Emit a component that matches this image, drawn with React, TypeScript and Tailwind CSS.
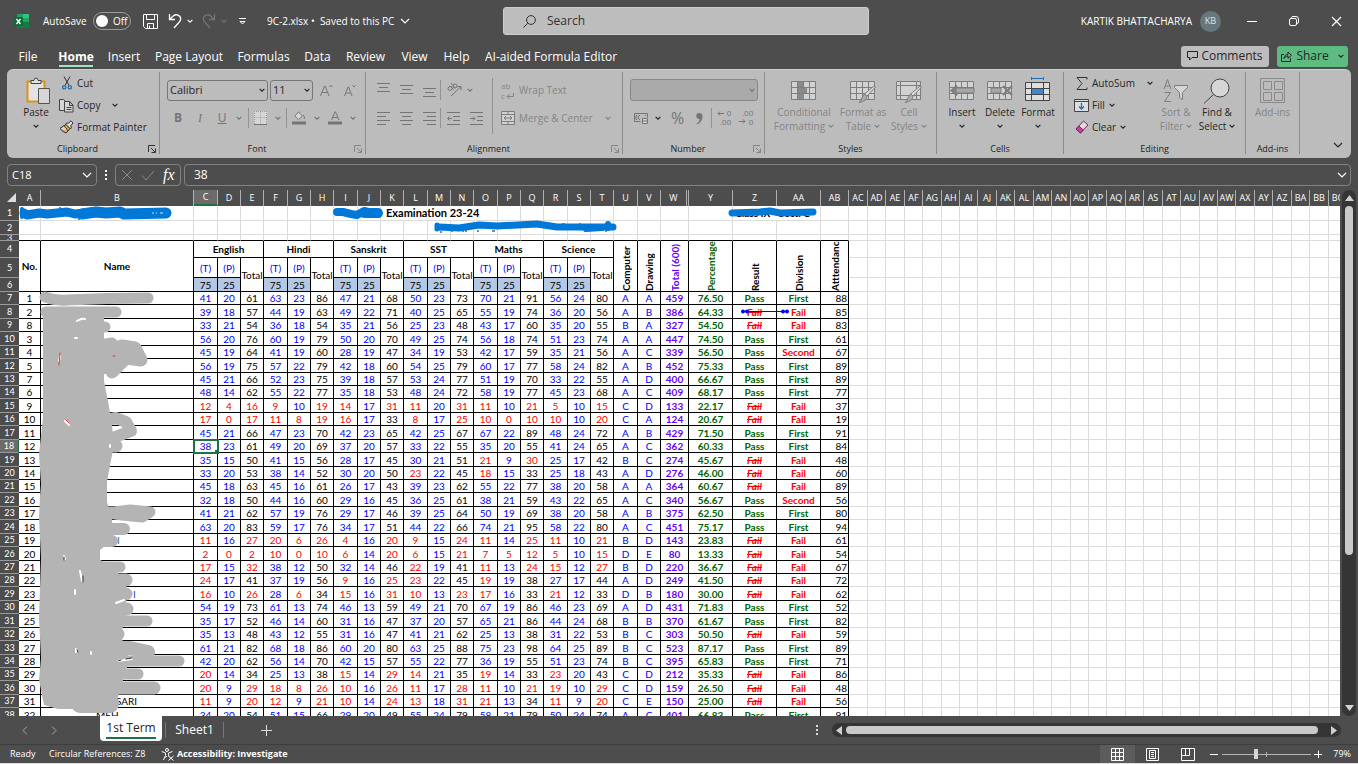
import type { ReactNode } from "react";

/* columns of the sheet: label + width */
const COLS: [string, number][] = [
  ["A", 22], ["B", 153],
  ["C", 24], ["D", 23], ["E", 23], ["F", 24], ["G", 23], ["H", 23],
  ["I", 24], ["J", 23], ["K", 23], ["L", 24], ["M", 23], ["N", 23],
  ["O", 24], ["P", 23], ["Q", 23], ["R", 24], ["S", 23], ["T", 23],
  ["U", 24], ["V", 23], ["W", 28], ["Y", 44], ["Z", 44], ["AA", 44], ["AB", 28],
];

const EMPTY = [
  "AC", "AD", "AE", "AF", "AG", "AH", "AI", "AJ", "AK", "AL", "AM", "AN", "AO", "AP",
  "AQ", "AR", "AS", "AT", "AU", "AV", "AW", "AX", "AY", "AZ", "BA", "BB", "BC",
];

const SUBJECTS = ["English", "Hindi", "Sanskrit", "SST", "Maths", "Science"];

type Student = [number, number[], string, string, string, number];

/* no, (T)/(P) marks, computer, drawing, division, attendance */
const STUDENTS: Student[] = [
  [1, [41, 20, 63, 23, 47, 21, 50, 23, 70, 21, 56, 24], "A", "A", "First", 88],
  [2, [39, 18, 44, 19, 49, 22, 40, 25, 55, 19, 36, 20], "A", "B", "Fail", 85],
  [8, [33, 21, 36, 18, 35, 21, 25, 23, 43, 17, 35, 20], "B", "A", "Fail", 83],
  [3, [56, 20, 60, 19, 50, 20, 49, 25, 56, 18, 51, 23], "A", "A", "First", 61],
  [4, [45, 19, 41, 19, 28, 19, 34, 19, 42, 17, 35, 21], "A", "C", "Second", 67],
  [5, [56, 19, 57, 22, 42, 18, 54, 25, 60, 17, 58, 24], "A", "B", "First", 89],
  [7, [45, 21, 52, 23, 39, 18, 53, 24, 51, 19, 33, 22], "A", "D", "First", 89],
  [6, [48, 14, 55, 22, 35, 18, 48, 24, 58, 19, 45, 23], "A", "C", "First", 77],
  [9, [12, 4, 9, 10, 14, 17, 11, 20, 11, 10, 5, 10], "C", "D", "Fail", 37],
  [10, [17, 0, 11, 8, 16, 17, 8, 17, 10, 0, 10, 10], "C", "A", "Fail", 19],
  [11, [45, 21, 47, 23, 42, 23, 42, 25, 67, 22, 48, 24], "A", "B", "First", 91],
  [12, [38, 23, 49, 20, 37, 20, 33, 22, 35, 20, 41, 24], "A", "C", "First", 84],
  [13, [35, 15, 41, 15, 28, 17, 30, 21, 21, 9, 25, 17], "B", "C", "Fail", 48],
  [14, [33, 20, 38, 14, 30, 20, 23, 22, 18, 15, 25, 18], "A", "D", "Fail", 60],
  [15, [45, 18, 45, 16, 26, 17, 39, 23, 55, 22, 38, 20], "A", "A", "Fail", 89],
  [16, [32, 18, 44, 16, 29, 16, 36, 25, 38, 21, 43, 22], "A", "C", "Second", 56],
  [17, [41, 21, 57, 19, 29, 17, 39, 25, 50, 19, 38, 20], "A", "B", "First", 80],
  [18, [63, 20, 59, 17, 34, 17, 44, 22, 74, 21, 58, 22], "A", "C", "First", 94],
  [19, [11, 16, 20, 6, 4, 16, 9, 15, 11, 14, 11, 10], "B", "D", "Fail", 61],
  [20, [2, 0, 10, 0, 6, 14, 6, 15, 7, 5, 5, 10], "D", "E", "Fail", 54],
  [21, [17, 15, 38, 12, 32, 14, 22, 19, 11, 13, 15, 12], "B", "D", "Fail", 67],
  [22, [24, 17, 37, 19, 9, 16, 23, 22, 19, 19, 27, 17], "A", "D", "Fail", 72],
  [23, [16, 10, 28, 6, 15, 16, 10, 13, 17, 16, 21, 12], "D", "B", "Fail", 62],
  [24, [54, 19, 61, 13, 46, 13, 49, 21, 67, 19, 46, 23], "A", "D", "First", 52],
  [25, [35, 17, 46, 14, 31, 16, 37, 20, 65, 21, 44, 24], "B", "B", "First", 82],
  [26, [35, 13, 43, 12, 31, 16, 41, 21, 25, 13, 31, 22], "B", "C", "Fail", 59],
  [27, [61, 21, 68, 18, 60, 20, 63, 25, 75, 23, 64, 25], "B", "C", "First", 89],
  [28, [42, 20, 56, 14, 42, 15, 55, 22, 36, 19, 51, 23], "B", "C", "First", 71],
  [29, [20, 14, 25, 13, 15, 14, 14, 21, 19, 14, 23, 20], "C", "D", "Fail", 86],
  [30, [20, 9, 18, 8, 10, 16, 11, 17, 11, 10, 19, 10], "C", "D", "Fail", 48],
  [31, [11, 9, 12, 9, 10, 14, 13, 18, 21, 13, 11, 9], "C", "E", "Fail", 56],
  [32, [34, 20, 51, 15, 29, 20, 55, 24, 58, 21, 50, 24], "A", "C", "First", 91],
];

function Chevron({ big = false }: { big?: boolean }) {
  return (
    <svg width={big ? 10 : 6} height={big ? 6 : 4} viewBox="0 0 10 6" fill="none" stroke="currentColor" strokeWidth={big ? 1.2 : 1.9} className="shrink-0">
      <path d="M1 1l4 4 4-4" />
    </svg>
  );
}

function Group({ label, className, launcher, children }: { label: string; className: string; launcher?: "on" | "off"; children: ReactNode }) {
  return (
    <section className={`flex shrink-0 flex-col border-r border-[#8c8c8c] ${className}`}>
      <div className="flex flex-1">{children}</div>
      <div className="flex h-[11px] items-center">
        <span className="flex-1 text-center text-[9px] leading-[11px] text-[#1c1c1c]">{label}</span>
        {launcher && (
          <button type="button" aria-label={`${label} settings`} className={`mr-[3px] ${launcher === "on" ? "text-[#333]" : "text-[#858585]"}`}>
            <svg width="8" height="8" viewBox="0 0 8 8" fill="none" stroke="currentColor">
              <path d="M.5 7V.5H7M3 3l4 4M7.5 3.500v4h-4" />
            </svg>
          </button>
        )}
      </div>
    </section>
  );
}

/* tall ribbon button: icon on top, one or two lines under it */
function Big({ icon, line1, line2, off, className }: { icon: ReactNode; line1: string; line2?: string; off?: boolean; className: string }) {
  return (
    <button type="button" className={`flex shrink-0 flex-col items-center pt-[4px] whitespace-nowrap ${off ? "text-[#858585]" : "text-[#262626]"} ${className}`}>
      <span className="flex h-[29px] items-center justify-center">{icon}</span>
      <span className="leading-[14px]">{line1}</span>
      {line2 !== undefined && (
        <span className="flex h-[14px] items-center gap-[3px] leading-[14px]">
          {line2}
          <Chevron />
        </span>
      )}
    </button>
  );
}

function Small({ icon, label, arrow, wide }: { icon: ReactNode; label: string; arrow?: boolean; wide?: boolean }) {
  return (
    <button type="button" className="flex h-[22px] items-center whitespace-nowrap text-[#262626]">
      <span className="mr-[3px] flex w-[15px] justify-center">{icon}</span>
      {label}
      {arrow && (
        <span className={wide ? "ml-[12px]" : "ml-[4px]"}>
          <Chevron />
        </span>
      )}
    </button>
  );
}

function Sep() {
  return <span className="h-[20px] w-px shrink-0 bg-[#939393]" />;
}

function Lines({ d }: { d: string }) {
  return (
    <svg width="14" height="14" viewBox="0 0 14 14" fill="none" stroke="#757575" className="shrink-0">
      <path d={d} />
    </svg>
  );
}

function TableIcon({ children }: { children?: ReactNode }) {
  return (
    <svg width="28" height="26" viewBox="0 0 28 26" fill="none" stroke="#7d7d7d">
      <path d="M1.500 3.500h24v18h-24z" fill="#d2d2d2" />
      <path d="M1.500 9.500h24M1.500 15.500h24M7.500 3.500v18M13.500 3.500v18M19.500 3.500v18" />
      {children}
    </svg>
  );
}

function TitleBar() {
  return (
    <header className="flex h-[42px] shrink-0 items-center text-[10px] text-white">
      <div className="flex w-[503px] shrink-0 items-center">
        <svg width="15" height="15" viewBox="0 0 15 15" className="ml-[14px]">
          <rect x="3" y="0" width="12" height="14" rx="1" fill="#21a366" />
          <path d="M3 7h12v6a1 1 0 01-1 1H4a1 1 0 01-1-1z" fill="#107c41" />
          <path d="M9 0h5a1 1 0 011 1v3H9z" fill="#33c481" />
          <path d="M9 4h6v4H9z" fill="#21a366" />
          <rect x="0" y="3" width="9" height="9" rx="1" fill="#0b6b37" />
          <path d="M2.500 5l4 5M6.500 5l-4 5" stroke="#fff" strokeWidth="1.300" />
        </svg>
        <label className="ml-[14px] flex items-center">
          <span className="w-[50px] whitespace-nowrap">AutoSave</span>
          <span className="relative flex">
            <input type="checkbox" className="h-[18px] w-[38px] appearance-none rounded-full border border-[#9a9a9a]" />
            <span className="absolute top-[3px] left-[3px] h-[12px] w-[12px] rounded-full bg-white" />
            <span className="absolute top-px left-[20px] leading-[16px]">Off</span>
          </span>
        </label>
        <button type="button" aria-label="Save" className="ml-[12px]">
          <svg width="15" height="15" viewBox="0 0 15 15" fill="none" stroke="#fff">
            <path d="M.5.5h14v14h-12l-2-2zM3.500.5v5h8v-5M4.500 14.500v-5h6v5M6.500 14v-2.500" />
          </svg>
        </button>
        <button type="button" aria-label="Undo" className="ml-[10px] flex items-center gap-[5px]">
          <svg width="14" height="16" viewBox="0 0 14 16" fill="none" stroke="#fff" strokeWidth="1.300">
            <path d="M1.500 1v5.500H7M1.800 6.200L5.500 2.800C8 .8 12.500 1.800 12.700 5.800c0 2-1 3-2 4L6 15" />
          </svg>
          <Chevron />
        </button>
        <button type="button" aria-label="Redo" className="ml-[9px] flex items-center gap-[5px] text-[#737373]">
          <svg width="14" height="16" viewBox="0 0 14 16" fill="none" stroke="currentColor" strokeWidth="1.300">
            <path d="M12.500 1v5.500H7M12.200 6.200L8.500 2.800C6 .8 1.500 1.800 1.300 5.800c0 2 1 3 2 4L8 15" />
          </svg>
          <Chevron />
        </button>
        <button type="button" aria-label="Customize toolbar" className="ml-[12px]">
          <svg width="7" height="8" viewBox="0 0 7 8" fill="none" stroke="#fff">
            <path d="M0 1.500h7M1 4.500l2.500 2.500L6 4.500z" />
          </svg>
        </button>
        <button type="button" className="ml-[21px] flex items-center gap-[4px] whitespace-nowrap">
          <span className="w-[129px] text-left">9C-2.xlsx&nbsp;•&nbsp; Saved to this PC</span>
          <Chevron big />
        </button>
      </div>
      <label className="flex h-[28px] max-w-[366px] flex-1 items-center rounded-[3px] border border-[#cdcdcd] bg-[#bdbdbd] pl-[19px] text-[#333]">
        <svg width="13" height="13" viewBox="0 0 13 13" fill="none" stroke="#333">
          <circle cx="8" cy="5" r="4.400" />
          <path d="M4.800 8.200L.4 12.600" />
        </svg>
        <input aria-label="Search" placeholder="Search" className="ml-[11px] flex-1 bg-transparent text-[12px] outline-none placeholder:text-[#333]" />
      </label>
      <div className="ml-auto flex items-center">
        <span className="whitespace-nowrap">KARTIK BHATTACHARYA</span>
        <span className="ml-[8px] flex h-[21px] w-[21px] items-center justify-center rounded-full bg-[#66777d] text-[9px] text-[#d5e6ec]">KB</span>
        <button type="button" aria-label="Minimize" className="ml-[26px]">
          <svg width="10" height="10" viewBox="0 0 10 10" stroke="#fff"><path d="M0 5.500h10" /></svg>
        </button>
        <button type="button" aria-label="Restore" className="ml-[32px]">
          <svg width="10" height="10" viewBox="0 0 10 10" fill="none" stroke="#fff">
            <rect x=".5" y="2.500" width="7" height="7" rx="1.500" />
            <path d="M2.500 2V1.800Q2.700.5 4 .5h3Q9.500.5 9.500 3v3Q9.500 7.300 8 7.500" />
          </svg>
        </button>
        <button type="button" aria-label="Close" className="mr-[16px] ml-[32px]">
          <svg width="11" height="11" viewBox="0 0 11 11" stroke="#fff" strokeWidth="1.200"><path d="M1 1l9 9M10 1l-9 9" /></svg>
        </button>
      </div>
    </header>
  );
}

const TABS: [string, string][] = [
  ["File", "w-[18px] mr-[22px]"],
  ["Home", "w-[34px] mr-[16px]"],
  ["Insert", "w-[30px] mr-[17px]"],
  ["Page Layout", "w-[66px] mr-[17px]"],
  ["Formulas", "w-[49px] mr-[17px]"],
  ["Data", "w-[25px] mr-[17px]"],
  ["Review", "w-[37px] mr-[17px]"],
  ["View", "w-[27px] mr-[16px]"],
  ["Help", "w-[25px] mr-[17px]"],
  ["AI-aided Formula Editor", "w-[130px]"],
];

function Tabs() {
  return (
    <nav className="flex h-[27px] shrink-0 items-center pt-px pr-[10px] pl-[19px] text-[12px] text-white">
      {TABS.map(([name, size]) => (
        <button
          type="button"
          key={name}
          className={`flex h-[21px] shrink-0 items-end justify-center border-b-2 leading-[17px] whitespace-nowrap ${size} ${name === "Home" ? "border-[#9fe5c2] font-bold" : "border-transparent"}`}
        >
          {name}
        </button>
      ))}
      <button type="button" className="ml-auto flex h-[21px] w-[88px] items-center justify-center gap-[3px] rounded-[3px] bg-[#bdbdbd] text-[#262626]">
        <svg width="11" height="10" viewBox="0 0 11 10" fill="none" stroke="currentColor"><path d="M.5.500h10v6H5L2.500 9V6.500h-2z" /></svg>
        Comments
      </button>
      <button type="button" className="ml-[8px] flex h-[21px] w-[71px] items-center justify-center gap-[4px] rounded-[3px] bg-[#5dba80] text-[#1c2b22]">
        <svg width="11" height="11" viewBox="0 0 11 11" fill="none" stroke="currentColor">
          <path d="M3 3.500H.5v7h9V7M3 7.500C3.300 4.500 5 3.500 7 3.500V1l3.500 3.300L7 7.300V5C5.500 5 4 5.800 3 7.500z" />
        </svg>
        Share
        <span className="ml-[5px] flex"><Chevron /></span>
      </button>
    </nav>
  );
}

function FontGroup() {
  return (
    <Group label="Font" className="w-[206px]" launcher="off">
      <div className="flex flex-col pt-[8px] pl-[7px] text-[#757575]">
        <div className="flex items-center">
          <label className="relative flex">
            <select aria-label="Font name" className="h-[21px] w-[101px] appearance-none rounded-[3px] border border-[#777] pl-[2px] text-[11px] text-[#262626]">
              <option>Calibri</option>
            </select>
            <span className="pointer-events-none absolute top-[8px] right-[3px] flex text-[#262626]"><Chevron /></span>
          </label>
          <label className="relative ml-[2px] flex">
            <select aria-label="Font size" className="h-[21px] w-[43px] appearance-none rounded-[3px] border border-[#777] pl-[2px] text-[11px] text-[#262626]">
              <option>11</option>
            </select>
            <span className="pointer-events-none absolute top-[8px] right-[3px] flex text-[#262626]"><Chevron /></span>
          </label>
          <button type="button" aria-label="Increase font size" className="ml-[7px]">
            <svg width="13" height="13" viewBox="0 0 13 13" fill="none" stroke="currentColor"><path d="M.5 12L4.500 2h.6l4 10M2 8.500h5.500M9.500 3L11 1.300 12.500 3" /></svg>
          </button>
          <button type="button" aria-label="Decrease font size" className="ml-[11px]">
            <svg width="12" height="13" viewBox="0 0 12 13" fill="none" stroke="currentColor"><path d="M.5 12L4 3h.6L8 12M2 9h4.500M8.500 1.300L10 3l1.500-1.700" /></svg>
          </button>
        </div>
        <div className="mt-[7px] flex h-[20px] items-center text-[12px]">
          <button type="button" className="w-[22px] font-bold">B</button>
          <button type="button" className="w-[22px] font-['Liberation_Serif',serif] italic">I</button>
          <button type="button" className="w-[22px] underline">U</button>
          <span className="mr-[6px] ml-[3px]"><Chevron /></span>
          <Sep />
          <svg width="14" height="14" viewBox="0 0 14 14" className="mr-[7px] ml-[5px]">
            <path d="M0 0h6v6H0zM7 0h6v6H7zM0 7h6v6H0zM7 7h6v6H7z" fill="#d6d6d6" />
            <path d="M0 13.500h13" stroke="#757575" />
            <path d="M.5 0v13M12.500 0v13M0 .5h13" stroke="#999" strokeDasharray="1 1" />
          </svg>
          <Chevron />
          <span className="mr-[5px] ml-[5px] flex"><Sep /></span>
          <svg width="15" height="14" viewBox="0 0 15 14" fill="none" stroke="#757575" className="mr-[7px]">
            <path d="M6.500 1l4 4-4 3.700-3.700-3.700 4.200-4.500" fill="#d6d6d6" />
            <path d="M11 4q2 1.500 1.300 4" />
            <path d="M0 12h14" strokeWidth="3" />
          </svg>
          <Chevron />
          <svg width="15" height="14" viewBox="0 0 15 14" fill="none" stroke="#757575" className="mr-[7px] ml-[8px]">
            <path d="M3.500 9L7 .8h.4L11 9M4.500 6.500h5" />
            <path d="M0 12h14" strokeWidth="3" />
          </svg>
          <Chevron />
        </div>
      </div>
    </Group>
  );
}

function AlignmentGroup() {
  return (
    <Group label="Alignment" className="w-[257px]" launcher="off">
      <div className="flex flex-col pt-[7px] pl-[11px] text-[#757575]">
        <div className="flex h-[21px] items-center gap-[9px]">
          <Lines d="M0 .5h13M2 4.500h9M0 8.500h13" />
          <Lines d="M0 2.500h13M2 6.500h9M0 10.500h13" />
          <Lines d="M0 5.500h13M2 9.500h9M0 13.500h13" />
        </div>
        <div className="mt-[8px] flex h-[20px] items-center gap-[9px]">
          <Lines d="M0 1.500h13M0 5.500h9M0 9.500h13M0 13.500h9" />
          <Lines d="M0 1.500h13M2 5.500h9M0 9.500h13M2 13.500h9" />
          <Lines d="M0 1.500h13M4 5.500h9M0 9.500h13M4 13.500h9" />
        </div>
      </div>
      <div className="mt-[8px] ml-[3px] flex flex-col gap-[8px]"><Sep /><Sep /></div>
      <div className="flex flex-col pt-[7px] pl-[6px] text-[#757575]">
        <div className="flex h-[21px] items-center gap-[5px]">
          <svg width="15" height="15" viewBox="0 0 15 15" fill="none" stroke="currentColor">
            <circle cx="3" cy="6.500" r="2" /><path d="M3.500 4l3 3.500" />
            <circle cx="8" cy="4" r="2" /><path d="M4 1l3.500 4.500M4 14L14 4.500M10.500 4.500H14V8" />
          </svg>
          <Chevron />
        </div>
        <div className="mt-[8px] flex h-[20px] items-center gap-[9px]">
          <Lines d="M0 1.500h13M6 5.500h7M6 9.500h7M0 13.500h13M5 7.500H.5M2.500 5.500l-2 2 2 2" />
          <Lines d="M0 1.500h13M7 5.500h6M7 9.500h6M0 13.500h13M0 7.500h5M3 5.500l2 2-2 2" />
        </div>
      </div>
      <span className="mt-[6px] ml-[8px] h-[56px] w-px bg-[#939393]" />
      <div className="flex flex-col pt-[8px] pl-[8px] whitespace-nowrap text-[#858585]">
        <button type="button" className="flex h-[21px] items-center">
          <span className="relative mr-[3px] flex w-[15px] flex-col text-left text-[8px] leading-[10px]">
            <span>ab</span>
            <span>c</span>
            <svg width="8" height="6" viewBox="0 0 8 6" fill="none" stroke="currentColor" className="absolute right-[2px] bottom-[2px]">
              <path d="M7.500 0v3.500H1M3.500 1L1 3.500 3.500 6" />
            </svg>
          </span>
          Wrap Text
        </button>
        <button type="button" className="mt-[7px] flex h-[20px] items-center">
          <svg width="14" height="14" viewBox="0 0 14 14" fill="#d2d2d2" stroke="#7d7d7d" className="mr-[4px]">
            <path d="M.5.500h13v13H.500zM.5 3.500h13M.5 10.500h13M7 .5v3M7 10.500v3M3 7h8M5 5L3 7l2 2M9 5l2 2-2 2" />
          </svg>
          <span className="w-[86px] text-left">Merge &amp; Center</span>
          <Chevron />
        </button>
      </div>
    </Group>
  );
}

function NumberGroup() {
  return (
    <Group label="Number" className="w-[142px]" launcher="off">
      <div className="flex flex-col pt-[7px] pl-[7px] text-[#757575]">
        <label className="relative flex">
          <select aria-label="Number format" disabled className="h-[22px] w-[128px] appearance-none rounded-[3px] border border-[#888] bg-[#aaa]">
            <option></option>
          </select>
          <span className="absolute top-[9px] right-[3px] flex"><Chevron /></span>
        </label>
        <div className="mt-[7px] flex h-[20px] items-center">
          <svg width="15" height="13" viewBox="0 0 15 13" fill="none" stroke="currentColor" className="mr-[6px] ml-[4px]">
            <path d="M.5 1.500h13v4M.5 1.500v8h6M3 3.500h-1v4h1M6 3.500q-2 0-2 2t2 2M11 3.500h1" />
            <path d="M8.500 6.500h5v5h-5zM8.500 9h5" fill="#d2d2d2" />
          </svg>
          <span className="text-[#262626]"><Chevron /></span>
          <button type="button" aria-label="Percent style" className="ml-[10px] text-[16px] leading-[20px]">%</button>
          <button type="button" aria-label="Comma style" className="ml-[11px]">
            <svg width="8" height="13" viewBox="0 0 8 13"><path d="M4 1a3 3 0 013.500 3.500c0 4-2.500 6.500-5.500 8l-.4-.8C4 10 4.600 8.600 4.600 7A3 3 0 014 1z" fill="currentColor" /></svg>
          </button>
          <span className="mr-[5px] ml-[8px] flex"><Sep /></span>
          <button type="button" aria-label="Increase decimal" className="relative flex w-[14px] flex-col items-end text-[8px] leading-[8px]">
            <span className="h-[9px]">0</span>
            <span className="h-[9px]">.00</span>
            <svg width="7" height="5" viewBox="0 0 7 5" fill="none" stroke="currentColor" className="absolute top-[2px] left-0"><path d="M7 2.500H1M3 .5l-2 2 2 2" /></svg>
          </button>
          <button type="button" aria-label="Decrease decimal" className="relative ml-[8px] flex w-[14px] flex-col items-end text-[8px] leading-[8px]">
            <span className="h-[9px]">.00</span>
            <span className="h-[9px]">0</span>
            <svg width="7" height="5" viewBox="0 0 7 5" fill="none" stroke="currentColor" className="absolute bottom-[3px] left-0"><path d="M0 2.500h6M4 .5l2 2-2 2" /></svg>
          </button>
        </div>
      </div>
    </Group>
  );
}

function Ribbon() {
  return (
    <div className="mx-[7px] flex h-[89px] shrink-0 overflow-hidden rounded-[6px] border-t border-[#cfcfcf] bg-[#bcbcbc] pt-[2px] pb-[4px] text-[10px]">
      <Group label="Clipboard" className="w-[153px]" launcher="on">
        <Big
          className="ml-[13px] w-[32px]"
          line1="Paste"
          line2=""
          icon={
            <svg width="26" height="28" viewBox="0 0 26 28" className="ml-[4px]">
              <path d="M2.500 4.500h17v20h-17z" fill="#e3e3e3" stroke="#d9931e" strokeWidth="2" />
              <path d="M6 6.500V3.500h3Q9 1 11 1t2 2.500h3v3z" fill="#e3e3e3" stroke="#444" />
              <path d="M13.500 11.500h11v15h-11z" fill="#d6d6d6" stroke="#555" />
            </svg>
          }
        />
        <div className="ml-[7px] flex flex-col">
          <Small
            label="Cut"
            icon={
              <svg width="10" height="14" viewBox="0 0 10 14" fill="none">
                <path d="M2 .5l5 9M8 .5l-5 9" stroke="#333" />
                <circle cx="2.200" cy="11.300" r="1.600" stroke="#1f6fb5" strokeWidth="1.300" />
                <circle cx="7.800" cy="11.300" r="1.600" stroke="#1f6fb5" strokeWidth="1.300" />
              </svg>
            }
          />
          <Small
            label="Copy"
            arrow
            wide
            icon={
              <svg width="15" height="15" viewBox="0 0 15 15" fill="#d6d6d6" stroke="#444">
                <path d="M6 12.500H.5V1.500h4l2 2" />
                <path d="M5.500 3.500h5l3.500 3.500v7h-8.500zM10.500 3.500v4H14M7.500 9.500h5M7.500 11.500h5" />
              </svg>
            }
          />
          <Small
            label="Format Painter"
            icon={
              <svg width="15" height="14" viewBox="0 0 15 14" stroke="#333">
                <path d="M1 8.500L7 4.500l4 4-4 4.500q-3-1-6-4.500z" fill="#e6a93a" />
                <path d="M1 8.500l3.500-2.500 2 1.500L9 11" fill="#ddd" />
                <path d="M6.500 4l5 5 1-2-1-1L14 3 12 .8 9 3.500 8 2.800z" fill="#ddd" />
              </svg>
            }
          />
        </div>
      </Group>

      <FontGroup />
      <AlignmentGroup />
      <NumberGroup />

      <Group label="Styles" className="w-[172px]">
        <Big className="ml-[7px] w-[64px]" off line1="Conditional" line2="Formatting" icon={<TableIcon><path d="M8 4h5v5H8zM8 10h9v5H8zM8 16h6v5H8z" fill="#8a8a8a" stroke="none" /></TableIcon>} />
        <Big
          className="w-[54px]"
          off
          line1="Format as"
          line2="Table"
          icon={
            <TableIcon>
              <path d="M26.500 9L18 18l-2.500-2L25 8z" fill="#ddd" />
              <path d="M15.500 16l2.500 2q0 5-8 6.500 3-2 3-5z" fill="#aaa" />
            </TableIcon>
          }
        />
        <Big
          className="w-[38px]"
          off
          line1="Cell"
          line2="Styles"
          icon={
            <svg width="28" height="26" viewBox="0 0 28 26" fill="none" stroke="#7d7d7d">
              <path d="M1.500 3.500h24v18h-24z" fill="#d2d2d2" />
              <path d="M1.500 7.500h24M1.500 17.500h24M5.500 3.500v18M21.500 3.500v18" />
              <path d="M26.500 9L18 18l-2.500-2L25 8z" fill="#ddd" />
              <path d="M15.500 16l2.500 2q0 5-8 6.500 3-2 3-5z" fill="#aaa" />
            </svg>
          }
        />
      </Group>

      <Group label="Cells" className="w-[127px]">
        <Big className="ml-[6px] w-[38px]" line1="Insert" line2="" icon={<TableIcon><path d="M9 7.500L3.500 12.500 9 17.500M4 12.500h22" strokeWidth="2" /><path d="M8 10h18v5H8z" fill="#a8a8a8" /></TableIcon>} />
        <Big className="w-[38px]" line1="Delete" line2="" icon={<TableIcon><path d="M17 8l9 9M26 8l-9 9" strokeWidth="2" /><path d="M5 10h10v5H5z" fill="#a8a8a8" /></TableIcon>} />
        <Big
          className="w-[38px]"
          line1="Format"
          line2=""
          icon={
            <svg width="26" height="28" viewBox="0 0 26 28" fill="none" stroke="#444">
              <path d="M.5 5.500h24v18H.5z" fill="#dedede" />
              <path d="M.5 11.500h24M.5 17.500h24M6.500 5.500v18M18.500 5.500v18" />
              <path d="M7 12h11v5H7z" fill="#3f87cf" stroke="none" />
              <path d="M6 1.500h13M6.500 0v3M18.500 0v3" stroke="#1f6fb5" />
            </svg>
          }
        />
      </Group>

      <Group label="Editing" className="w-[182px]">
        <div className="flex w-[92px] flex-col pl-[10px]">
          <Small label="AutoSum" arrow wide icon={<svg width="12" height="13" viewBox="0 0 12 13" fill="none" stroke="#333"><path d="M11 2.500V.5H1l5 6-5 6h10v-2" /></svg>} />
          <Small label="Fill" arrow icon={<svg width="15" height="13" viewBox="0 0 15 13" fill="#dedede" stroke="#444"><path d="M.5.5h14v12H.500zM.5 2.500h14" /><path d="M7.500 4v6M5 7.500l2.500 2.500L10 7.500" stroke="#1f6fb5" strokeWidth="1.300" fill="none" /></svg>} />
          <Small label="Clear" arrow icon={<svg width="14" height="14" viewBox="0 0 14 14" stroke="#7d2360"><path d="M1 9L8.500 1l4.500 4-7.500 8z" fill="#ddd" /><path d="M1 9l2.800-3 4.500 4L5.500 13z" fill="#c9409b" /></svg>} />
        </div>
        <Big
          className="w-[40px]"
          off
          line1="Sort &"
          line2="Filter"
          icon={
            <svg width="26" height="26" viewBox="0 0 26 26" fill="none" stroke="#7d7d7d">
              <path d="M1 11L4.500 1.500 8 11M2 8h5M1.500 14.500h6L1.500 23.500h6.500" />
              <path d="M11.500 7.500h13v2l-5 5v7l-3-2v-5l-5-5z" fill="#d6d6d6" />
            </svg>
          }
        />
        <Big
          className="w-[42px]"
          line1="Find &"
          line2="Select"
          icon={<svg width="28" height="28" viewBox="0 0 28 28" fill="none" stroke="#444"><circle cx="17" cy="11" r="9" fill="#d6d6d6" /><path d="M10.500 17.500L1 26.500" /></svg>}
        />
      </Group>

      <Group label="Add-ins" className="w-[54px]">
        <Big
          className="w-[53px]"
          off
          line1="Add-ins"
          icon={<svg width="26" height="26" viewBox="0 0 26 26" fill="none" stroke="#8a8a8a"><path d="M.5.500h24v24H.500zM3.500 3.500h8v8h-8zM14.500 3.500h8v8h-8zM3.500 14.500h8v8h-8zM14.500 14.500h8v8h-8z" /></svg>}
        />
      </Group>
      <button type="button" aria-label="Collapse ribbon" className="mr-[8px] mb-[6px] ml-auto self-end text-[#262626]"><Chevron big /></button>
    </div>
  );
}

function FormulaBar() {
  return (
    <div className="flex h-[32px] shrink-0 items-center px-[7px] pt-[2px] text-[12px] text-white">
      <label className="flex h-[22px] w-[90px] items-center rounded-[4px] border border-[#828282] pr-[4px] pl-[4px]">
        <input aria-label="Name box" defaultValue="C18" className="min-w-0 flex-1 bg-transparent text-[11px] outline-none" />
        <Chevron big />
      </label>
      <span className="mx-[7px] flex flex-col gap-[2px] px-[1px]">
        <i className="h-[2px] w-[2px] bg-white" />
        <i className="h-[2px] w-[2px] bg-white" />
        <i className="h-[2px] w-[2px] bg-white" />
      </span>
      <div className="flex h-[22px] w-[66px] items-center rounded-[4px] border border-[#828282] pl-[5px]">
        <button type="button" aria-label="Cancel"><svg width="12" height="12" viewBox="0 0 12 12" stroke="#8a8a8a"><path d="M1 1l10 10M11 1L1 11" /></svg></button>
        <button type="button" aria-label="Enter" className="ml-[8px]"><svg width="14" height="11" viewBox="0 0 14 11" fill="none" stroke="#8a8a8a"><path d="M1 5.500l4 4.500L13 1" /></svg></button>
        <button type="button" aria-label="Insert function" className="ml-[8px] font-['Liberation_Serif',serif] text-[16px] leading-[20px] italic">fx</button>
      </div>
      <label className="ml-[3px] flex h-[22px] flex-1 items-center rounded-[4px] border border-[#828282] pr-[3px] pl-[9px]">
        <input aria-label="Formula" defaultValue="38" className="min-w-0 flex-1 bg-transparent outline-none" />
        <Chevron big />
      </label>
    </div>
  );
}

function RowHead({ n, active }: { n: number; active?: boolean }) {
  return (
    <th scope="row" className={`border-b border-[#999] text-center text-[9px] font-normal text-white ${active ? "border-r border-r-[#1e7145] bg-[#6b6b6b]" : "bg-[#4d4d4d]"}`}>
      <div className={n === 3 ? "h-[5px] overflow-hidden leading-[5px]" : ""}>{n}</div>
    </th>
  );
}

function Blank({ keys }: { keys: string[] }) {
  return keys.map((k) => <td key={k} className="border-r border-b border-[#dcdcdc]" />);
}

const LETTERS = COLS.map((c) => c[0]);
const LINE = "border-r border-b border-black text-center";
const ROTATED = "ml-auto mr-auto flex h-[50px] rotate-180 items-center overflow-hidden whitespace-nowrap [writing-mode:vertical-rl]";

function StudentRow({ s, i }: { s: Student; i: number }) {
  const [no, marks, computer, drawing, division, attendance] = s;
  const totals = SUBJECTS.map((_, k) => marks[k * 2] + marks[k * 2 + 1]);
  const sum = totals.reduce((a, b) => a + b, 0);
  const row = i + 7;
  const tall = i % 7 === 1 || i % 7 === 3 || i % 7 === 5;
  const names: Record<number, [string, string]> = {
    7: ["A", "pl-[2px] text-[#f00]"],
    23: ["A", "pl-[1px] text-black"],
    25: ["I", "pl-[76px] text-[#1f6fb5]"],
    29: ["I", "pl-[92px] text-[#1f3fb5]"],
    37: ["SARI", "pl-[75px] text-black"],
    38: ["MEH", "pl-[55px] text-black"],
  };
  const name = names[row];
  return (
    <tr className={tall ? "h-[14px]" : "h-[13px]"}>
      <RowHead n={row} active={row === 18} />
      <td className={LINE}>{no}</td>
      <td className="border-r border-b border-black text-left">{name && <span className={`block ${name[1]}`}>{name[0]}</span>}</td>
      {totals.map((t, k) => [
        <td key={`t${k}`} className={`${LINE} ${marks[k * 2] < 25 ? "text-[#f00]" : "text-[#00f]"} ${row === 18 && k === 0 ? "relative outline-2 -outline-offset-1 outline-[#1e7145]" : ""}`}>
          {marks[k * 2]}
          {row === 18 && k === 0 && <span className="absolute -right-[2px] -bottom-[2px] h-[4px] w-[4px] bg-[#1e7145]" />}
        </td>,
        <td key={`p${k}`} className={`${LINE} ${marks[k * 2 + 1] < 9 ? "text-[#f00]" : "text-[#00f]"}`}>{marks[k * 2 + 1]}</td>,
        <td key={`s${k}`} className={`${LINE} ${t < 33 ? "text-[#f00]" : "text-black"}`}>{t}</td>,
      ])}
      <td className={`${LINE} text-[#00f]`}>{computer}</td>
      <td className={`${LINE} text-[#00f]`}>{drawing}</td>
      <td className={`${LINE} font-bold text-[#60f]`}>{sum}</td>
      <td className={`${LINE} font-bold text-[#006400]`}>{(sum / 6).toFixed(2)}</td>
      {division === "Fail" ? (
        <td className={`${LINE} font-bold text-[#f00] italic line-through`}>Fail</td>
      ) : (
        <td className={`${LINE} font-bold text-[#006400]`}>Pass</td>
      )}
      <td className={`${LINE} font-bold ${division === "First" ? "text-[#006400]" : "text-[#f00]"}`}>{division}</td>
      <td className="border-r border-b border-black pr-px text-right">{attendance}</td>
      <Blank keys={EMPTY} />
    </tr>
  );
}

/* pen marks drawn over the names and the headings */
function PenMarks() {
  return (
    <svg width="860" height="526" viewBox="0 190 860 526" fill="none" strokeLinecap="round" strokeLinejoin="round" className="pointer-events-none absolute top-0 left-0">
      <path d="M59 208h2M116 209h3M78 219h2M356 215v2M441 231v2M452 230v2M463 230v2M466 230v2M478 230v2M492 231h3M562 224h3M580 223v2M605 231h2" stroke="#111" strokeLinecap="butt" />
      <g stroke="#0078d7">
        <path d="M24 213l3 2 12-2 8 1 20-2 8 2 18-2 15 1" strokeWidth="9" />
        <path d="M22 209v8" strokeWidth="4" />
        <path d="M82 214l14-2 10 1 14-1 4 2 42-1" strokeWidth="11" />
        <path d="M337 212h6l8 2 6 1 7-4 14 3" strokeWidth="8" />
        <path d="M364 213h14" strokeWidth="10" />
        <path d="M439 227l20 1 20-3 18 1 40-2 20 3h56" strokeWidth="7" />
        <path d="M586 229l16-1M608 224v4" strokeWidth="6" />
        <path d="M437 225v4" strokeWidth="5" />
        <path d="M732 213l28-1 10-1 10 2 33-1" strokeWidth="7" />
      </g>
      <path d="M152 213h2M156 213h1M160 213h3" stroke="#cfe6f8" strokeLinecap="butt" />

      <path d="M43 307h61v74l4 20 4 24 2 20-3 15-4 22v20l5 16v22l-12 10v10l14 6 12 20v34l-6 14 8 20v10l-8 26-4 14-22 5H58l-14-4-5-25 2-22-2-40 2-60-2-40 1-22 1-12-2-30 4-36V307z" fill="#b4b4b4" />
      <g stroke="#b4b4b4" strokeWidth="11">
        <path d="M45 297q10 4 22 3 40-2 81-2" />
        <path d="M46 312h70" />
        <path d="M100 327h5M100 345l12-2" />
        <path d="M104 351l18-5 13 2 6 12-15-2-14 14" strokeWidth="13" />
        <path d="M104 352l12 2 8 4-12 12h-10V352" strokeWidth="8" fill="#b4b4b4" />
        <path d="M106 420l10-2 10 4 5 9-16 6" strokeWidth="12" />
        <path d="M106 446h10" strokeWidth="13" />
        <path d="M104 512h10l16-2 20 2-8 5-20-2-14-2" />
        <path d="M90 529h34M90 541h22" strokeWidth="12" />
        <path d="M90 567h30" />
        <path d="M90 580h36" strokeWidth="13" />
        <path d="M90 594h36M90 609h37" strokeWidth="13" />
        <path d="M90 621h57" />
        <path d="M90 634h28" strokeWidth="13" />
        <path d="M90 648h40l18 4" strokeWidth="14" />
        <path d="M90 661h89" />
        <path d="M90 674h48" />
        <path d="M100 688h54" strokeWidth="13" />
        <path d="M80 704h30" strokeWidth="18" />
      </g>
      <g stroke="#fff" strokeWidth="2">
        <path d="M77 321q5-3 8-2M60 356l-1 5M65 421l4 4M110 445v2M116 603l8-3M75 338h2M64 556l1 3M80 571l2 10M75 590v4M76 649v3M91 652v2M118 661l14-2" />
      </g>
      <path d="M60 353l-1 12M66 420l3 3M113 356h2" stroke="#e33" />
      <path d="M64 557v3M118 661l3-1M126 659l6-1M77 650l1 2M83 576v6" stroke="#333" />

      <path d="M744 311.500h43" stroke="#00f" />
      <g fill="#00f">
        <circle cx="743" cy="311.500" r="2" />
        <circle cx="747" cy="311.500" r="2" />
        <circle cx="783" cy="311.500" r="2" />
        <circle cx="787" cy="311.500" r="2" />
      </g>
    </svg>
  );
}

function Sheet() {
  return (
    <main className="flex min-h-0 flex-1">
      <div className="relative min-w-0 flex-1 overflow-hidden bg-white">
        <table className="w-[1347px] table-fixed border-separate border-spacing-0 font-[Lato,sans-serif] text-[10px] leading-[12px] text-black">
          <colgroup>
            <col style={{ width: 19 }} />
            {COLS.map(([c, w]) => <col key={c} style={{ width: w }} />)}
            {EMPTY.map((c, i) => <col key={c} style={{ width: [0, 2, 4].includes(i % 7) ? 19 : 18 }} />)}
          </colgroup>
          <thead>
            <tr className="h-[16px] bg-[#4d4d4d] font-['Open_Sans',sans-serif] text-[9px] text-white">
              <td aria-label="Select all">
                <svg width="10" height="10" viewBox="0 0 10 10" className="ml-[7px]"><path d="M9 0v9H0z" fill="#ddd" /></svg>
              </td>
              {[...LETTERS, ...EMPTY].map((c) => (
                <th key={c} scope="col" className={`border-r border-[#b0b0b0] text-center font-normal ${c === "C" ? "border-b-2 border-b-[#1e7145] bg-[#6b6b6b]" : ""} ${c === "W" ? "border-r-3 border-double" : ""}`}>
                  {c}
                </th>
              ))}
            </tr>
          </thead>
          <tbody>
            <tr className="h-[15px]">
              <RowHead n={1} />
              <Blank keys={LETTERS.slice(0, 10)} />
              <td colSpan={5} className="border-r border-b border-[#dcdcdc] pl-[5px] text-[11px] font-bold whitespace-nowrap">Examination 23-24</td>
              <Blank keys={LETTERS.slice(15, 23)} />
              <td className="border-r border-b border-[#dcdcdc]" />
              <td colSpan={2} className="border-r border-b border-[#dcdcdc] pr-[8px] text-center font-bold whitespace-nowrap">Class IX - Sect: C</td>
              <Blank keys={["AB", ...EMPTY]} />
            </tr>
            <tr className="h-[14px]">
              <RowHead n={2} />
              <Blank keys={[...LETTERS, ...EMPTY]} />
            </tr>
            <tr className="h-[6px]">
              <RowHead n={3} />
              {LETTERS.map((c) => <td key={c} className="border-r border-b border-r-[#dcdcdc] border-b-black" />)}
              <Blank keys={EMPTY} />
            </tr>
            <tr className="h-[17px] font-bold">
              <RowHead n={4} />
              <td rowSpan={3} className={LINE}>No.</td>
              <td rowSpan={3} className={LINE}>Name</td>
              {SUBJECTS.map((s) => <td key={s} colSpan={3} className={LINE}>{s}</td>)}
              <td rowSpan={3} className={LINE}><div className={ROTATED}>Computer</div></td>
              <td rowSpan={3} className={LINE}><div className={ROTATED}>Drawing</div></td>
              <td rowSpan={3} className={`${LINE} text-[#60f]`}><div className={ROTATED}>Total (600)</div></td>
              <td rowSpan={3} className={`${LINE} text-[#006400]`}><div className={ROTATED}>Percentage</div></td>
              <td rowSpan={3} className={LINE}><div className={ROTATED}>Result</div></td>
              <td rowSpan={3} className={LINE}><div className={ROTATED}>Division</div></td>
              <td rowSpan={3} className={LINE}><div className={ROTATED}>Atttendance</div></td>
              <Blank keys={EMPTY} />
            </tr>
            <tr className="h-[20px]">
              <RowHead n={5} />
              {SUBJECTS.map((s) => [
                <td key={`${s}t`} className={`${LINE} text-[#00f]`}>(T)</td>,
                <td key={`${s}p`} className={`${LINE} text-[#00f]`}>(P)</td>,
                <td key={`${s}s`} rowSpan={2} className={`${LINE} whitespace-nowrap`}>Total</td>,
              ])}
              <Blank keys={EMPTY} />
            </tr>
            <tr className="h-[14px]">
              <RowHead n={6} />
              {SUBJECTS.map((s) => [
                <td key={`${s}t`} className={`${LINE} bg-[#b4c7e3]`}>75</td>,
                <td key={`${s}p`} className={`${LINE} bg-[#b4c7e3]`}>25</td>,
              ])}
              <Blank keys={EMPTY} />
            </tr>
            {STUDENTS.map((s, i) => <StudentRow key={s[0]} s={s} i={i} />)}
          </tbody>
        </table>
        <PenMarks />
      </div>
      <div className="mr-[2px] ml-[2px] flex w-[14px] shrink-0 flex-col items-center rounded-[7px] bg-[#353535] py-[5px]">
        <svg width="9" height="6" viewBox="0 0 9 6" fill="#d0d0d0"><path d="M4.500 0L9 6H0z" /></svg>
        <span className="mt-[5px] h-[349px] w-[8px] rounded-[4px] bg-[#c9c9c9]" />
        <svg width="9" height="6" viewBox="0 0 9 6" fill="#d0d0d0" className="mt-auto"><path d="M0 0h9L4.500 6z" /></svg>
      </div>
    </main>
  );
}

function SheetTabs() {
  return (
    <nav className="flex h-[29px] shrink-0 items-center border-b border-[#3d3d3d] pr-[17px] text-[12px] text-white">
      <button type="button" aria-label="Previous sheet" className="ml-[22px]"><svg width="6" height="9" viewBox="0 0 6 9" fill="none" stroke="#a5a5a5"><path d="M5 .5l-4 4 4 4" /></svg></button>
      <button type="button" aria-label="Next sheet" className="ml-[23px]"><svg width="6" height="9" viewBox="0 0 6 9" fill="none" stroke="#a5a5a5"><path d="M1 .5l4 4-4 4" /></svg></button>
      <button type="button" className="ml-[43px] flex h-[25px] w-[62px] justify-center self-start rounded-b-[4px] bg-white text-[#262626]">
        <span className="h-[23px] border-b-2 border-[#1e7145] leading-[24px] whitespace-nowrap">1st Term</span>
      </button>
      <span className="ml-[3px] h-[16px] w-px bg-[#777]" />
      <button type="button" className="w-[57px]">Sheet1</button>
      <span className="h-[16px] w-px bg-[#777]" />
      <button type="button" aria-label="New sheet" className="ml-[37px]"><svg width="11" height="11" viewBox="0 0 11 11" stroke="#ddd"><path d="M5.500 0v11M0 5.500h11" /></svg></button>
      <span className="ml-auto flex flex-col gap-[2px]">
        <i className="h-[2px] w-[2px] bg-[#ddd]" />
        <i className="h-[2px] w-[2px] bg-[#ddd]" />
        <i className="h-[2px] w-[2px] bg-[#ddd]" />
      </span>
      <div className="ml-[14px] flex h-[14px] w-[509px] items-center rounded-[7px] bg-[#353535] px-[4px]">
        <svg width="6" height="9" viewBox="0 0 6 9" fill="#d0d0d0"><path d="M6 0v9L0 4.500z" /></svg>
        <span className="mr-[13px] ml-[4px] h-[8px] flex-1 rounded-[4px] bg-[#c9c9c9]" />
        <svg width="6" height="9" viewBox="0 0 6 9" fill="#d0d0d0"><path d="M0 0v9l6-4.500z" /></svg>
      </div>
    </nav>
  );
}

function StatusBar() {
  return (
    <footer className="flex h-[19px] shrink-0 items-center border-b border-[#e0e0e0] text-[9px] whitespace-nowrap text-white">
      <span className="ml-[10px] w-[39px]">Ready</span>
      <span className="w-[112px]">Circular References: Z8</span>
      <svg width="13" height="13" viewBox="0 0 13 13" fill="none" stroke="#fff" className="mr-[3px]">
        <circle cx="6" cy="2" r="1.500" />
        <path d="M.8 3.500L4.500 5v2.500L2.500 12M11.500 3.500L7.500 5v2.500l1 1.500M4.500 9.500L6 8M7.500 8l5 4.500M12.500 8l-5 4.500" />
      </svg>
      <button type="button" className="font-bold">Accessibility: Investigate</button>
      <button type="button" aria-label="Normal view" className="ml-auto flex h-[18px] w-[35px] items-center justify-center bg-[#5c5c5c]">
        <svg width="13" height="13" viewBox="0 0 13 13" fill="none" stroke="#fff"><path d="M.5.500h12v12H.500zM4.500.5v12M8.500.5v12M.5 4.500h12M.5 8.500h12" /></svg>
      </button>
      <button type="button" aria-label="Page layout view" className="ml-[11px]">
        <svg width="13" height="13" viewBox="0 0 13 13" fill="none" stroke="#fff"><path d="M.5.500h12v12H.500zM3.500 2.500h6v8h-6zM5 4.500h3M5 6.500h3M5 8.500h3" /></svg>
      </button>
      <button type="button" aria-label="Page break view" className="ml-[22px]">
        <svg width="14" height="13" viewBox="0 0 14 13" fill="none" stroke="#fff"><path d="M.5.500h13v12H.500zM.5 7.500h8v-7M4.500.5v7" /></svg>
      </button>
      <button type="button" aria-label="Zoom out" className="ml-[15px]"><svg width="8" height="8" viewBox="0 0 8 8" stroke="#fff"><path d="M0 4.500h8" /></svg></button>
      <label className="relative ml-[4px] flex w-[89px] items-center">
        <input
          type="range"
          aria-label="Zoom"
          defaultValue={38}
          className="h-px w-full appearance-none bg-[#b5b5b5] [&::-webkit-slider-thumb]:h-[10px] [&::-webkit-slider-thumb]:w-[4px] [&::-webkit-slider-thumb]:appearance-none [&::-webkit-slider-thumb]:bg-[#d5d5d5]"
        />
        <span className="absolute left-[44px] h-[5px] w-px bg-[#b5b5b5]" />
      </label>
      <button type="button" aria-label="Zoom in" className="ml-[3px]"><svg width="8" height="8" viewBox="0 0 8 8" stroke="#fff"><path d="M0 4.500h8M4.500.5v8" /></svg></button>
      <span className="mr-[7px] ml-[10px] w-[19px] text-right">79%</span>
    </footer>
  );
}

export default function App() {
  return (
    <div className="flex h-screen flex-col overflow-hidden bg-[#4d4d4d] font-['Open_Sans',sans-serif]">
      <TitleBar />
      <Tabs />
      <Ribbon />
      <FormulaBar />
      <Sheet />
      <SheetTabs />
      <StatusBar />
    </div>
  );
}
